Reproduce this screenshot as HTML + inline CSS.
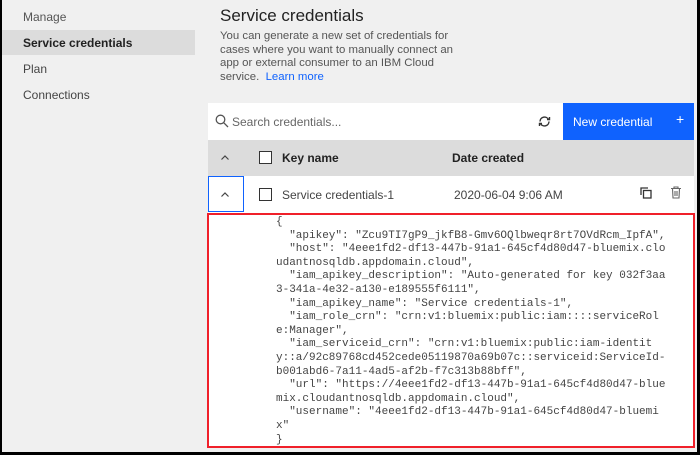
<!DOCTYPE html>
<html><head><style>
*{margin:0;padding:0;box-sizing:border-box}
body{width:700px;height:455px;overflow:hidden;background:#000;font-family:"Liberation Sans",sans-serif;position:relative}
#f{position:absolute;left:2px;top:0;width:695px;height:452px;background:#f0f0f0;overflow:hidden}
.a{position:absolute}
.nav{left:21px;font-size:12px;color:#444}
.mono{font-family:"Liberation Mono",monospace;font-size:11px;color:#444;white-space:pre;line-height:13.6px}
.cb{position:absolute;width:13px;height:13px;border:1.5px solid #333;background:#fff}
</style></head><body><div id="f">
<div class="a nav" style="top:10px;color:#555">Manage</div>
<div class="a" style="left:0;top:30px;width:193px;height:25px;background:#dcdcdc"></div>
<div class="a nav" style="top:36px;font-weight:bold;color:#222">Service credentials</div>
<div class="a nav" style="top:62px">Plan</div>
<div class="a nav" style="top:88px">Connections</div>
<div class="a" style="left:218px;top:6px;font-size:17px;color:#222">Service credentials</div>
<div class="a" style="left:218px;top:30px;width:240px;font-size:11.4px;line-height:13.6px;color:#555">You can generate a new set of credentials for cases where you want to manually connect an app or external consumer to an IBM Cloud service. &nbsp;<span style="color:#0f62fe">Learn more</span></div>
<div class="a" style="left:206px;top:103px;width:355px;height:37px;background:#fff"></div>
<svg class="a" style="left:213px;top:114px" width="14" height="14" viewBox="0 0 14 14"><circle cx="5.5" cy="5.5" r="4.3" fill="none" stroke="#555" stroke-width="1.3"/><path d="M8.7 8.7L13 13" stroke="#555" stroke-width="1.3"/></svg>
<div class="a" style="left:230px;top:115px;font-size:12px;color:#666">Search credentials...</div>
<svg class="a" style="left:536px;top:115px" width="13" height="13" viewBox="0 0 13 13"><path d="M2 6.5A4.5 4.5 0 0 1 10.5 4.5M11 6.5A4.5 4.5 0 0 1 2.5 8.5" fill="none" stroke="#333" stroke-width="1.4"/><path d="M9 4.5h2.5V2M4 8.5H1.5V11" fill="none" stroke="#333" stroke-width="1.4"/></svg>
<div class="a" style="left:561px;top:103px;width:131px;height:37px;background:#0f62fe"></div>
<div class="a" style="left:571px;top:115px;font-size:12px;color:#fff">New credential</div>
<div class="a" style="left:674px;top:111px;font-size:14px;color:#fff">+</div>
<div class="a" style="left:206px;top:140px;width:486px;height:36px;background:#dcdcdc"></div>
<svg class="a" style="left:219px;top:155px" width="8" height="5" viewBox="0 0 8 5"><path d="M0.5 4.5L4 1L7.5 4.5" fill="none" stroke="#444" stroke-width="1.2"/></svg>
<div class="cb" style="left:257px;top:151px"></div>
<div class="a" style="left:280px;top:151px;font-size:12px;font-weight:bold;color:#222">Key name</div>
<div class="a" style="left:450px;top:151px;font-size:12px;font-weight:bold;color:#222">Date created</div>
<div class="a" style="left:206px;top:176px;width:486px;height:37px;background:#fff"></div>
<div class="a" style="left:206px;top:176px;width:36px;height:36px;border:1.5px solid #0f62fe"></div>
<svg class="a" style="left:219px;top:192px" width="8" height="5" viewBox="0 0 8 5"><path d="M0.5 4.5L4 1L7.5 4.5" fill="none" stroke="#444" stroke-width="1.2"/></svg>
<div class="cb" style="left:257px;top:188px"></div>
<div class="a" style="left:280px;top:188px;font-size:12px;color:#444">Service credentials-1</div>
<div class="a" style="left:452px;top:188px;font-size:12px;color:#444">2020-06-04 9:06 AM</div>
<svg class="a" style="left:638px;top:187px" width="12" height="12" viewBox="0 0 12 12"><path d="M1 8V1h7" fill="none" stroke="#333" stroke-width="1.3"/><rect x="3.5" y="3.5" width="7.5" height="7.5" fill="none" stroke="#333" stroke-width="1.3"/></svg>
<svg class="a" style="left:668px;top:186px" width="12" height="13" viewBox="0 0 12 13"><path d="M1 2.5h10M4 2.5V1h4v1.5M2.5 2.5l.5 9.5h6l.5-9.5M5 5v5M7 5v5" fill="none" stroke="#666" stroke-width="1.1"/></svg>
<div class="a" style="left:205px;top:213px;width:488px;height:235px;background:#fff;border:2px solid #f0202a"></div>
<div class="a mono" style="left:274px;top:216px">{
  "apikey": "Zcu9TI7gP9_jkfB8-Gmv6OQlbweqr8rt7OVdRcm_IpfA",
  "host": "4eee1fd2-df13-447b-91a1-645cf4d80d47-bluemix.clo
udantnosqldb.appdomain.cloud",
  "iam_apikey_description": "Auto-generated for key 032f3aa
3-341a-4e32-a130-e189555f6111",
  "iam_apikey_name": "Service credentials-1",
  "iam_role_crn": "crn:v1:bluemix:public:iam::::serviceRol
e:Manager",
  "iam_serviceid_crn": "crn:v1:bluemix:public:iam-identit
y::a/92c89768cd452cede05119870a69b07c::serviceid:ServiceId-
b001abd6-7a11-4ad5-af2b-f7c313b88bff",
  "url": "https://4eee1fd2-df13-447b-91a1-645cf4d80d47-blue
mix.cloudantnosqldb.appdomain.cloud",
  "username": "4eee1fd2-df13-447b-91a1-645cf4d80d47-bluemi
x"
}</div>
</div></body></html>
